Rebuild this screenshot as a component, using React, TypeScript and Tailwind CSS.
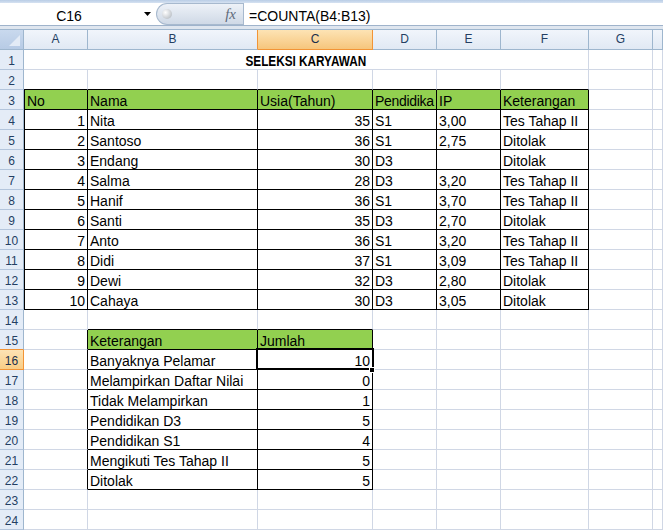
import clsx from "clsx";

// ================== SHEET DATA ==================
type V = string | number | null;

const data: Record<number, V[]> = {
  3: ["No", "Nama", "Usia(Tahun)", "Pendidika", "IP", "Keterangan"],
  4: [1, "Nita", 35, "S1", "3,00", "Tes Tahap II"],
  5: [2, "Santoso", 36, "S1", "2,75", "Ditolak"],
  6: [3, "Endang", 30, "D3", null, "Ditolak"],
  7: [4, "Salma", 28, "D3", "3,20", "Tes Tahap II"],
  8: [5, "Hanif", 36, "S1", "3,70", "Tes Tahap II"],
  9: [6, "Santi", 35, "D3", "2,70", "Ditolak"],
  10: [7, "Anto", 36, "S1", "3,20", "Tes Tahap II"],
  11: [8, "Didi", 37, "S1", "3,09", "Tes Tahap II"],
  12: [9, "Dewi", 32, "D3", "2,80", "Ditolak"],
  13: [10, "Cahaya", 30, "D3", "3,05", "Ditolak"],
  15: [null, "Keterangan", "Jumlah"],
  16: [null, "Banyaknya Pelamar", 10],
  17: [null, "Melampirkan Daftar Nilai", 0],
  18: [null, "Tidak Melampirkan", 1],
  19: [null, "Pendidikan D3", 5],
  20: [null, "Pendidikan S1", 4],
  21: [null, "Mengikuti Tes Tahap II", 5],
  22: [null, "Ditolak", 5],
};

const letters = ["A", "B", "C", "D", "E", "F", "G", "H"];
const rows = Array.from({ length: 24 }, (_, i) => i + 1);

const inTable = (r: number, c: number) =>
  (r >= 3 && r <= 13 && c >= 0 && c <= 5) ||
  (r >= 15 && r <= 22 && c >= 1 && c <= 2);

const isGreen = (r: number, c: number) =>
  (r === 3 && c <= 5) || (r === 15 && (c === 1 || c === 2));

// ================== FORMULA BAR ==================
const FormulaBar = () => (
  <div className="flex h-[30px] flex-col">
    <div className="h-[3px] bg-gradient-to-b from-[#b9cde6] to-[#d6e2f1]" />
    <div className="flex h-[22px] bg-white text-[14px] leading-[16px] text-black">
      <div className="flex w-[138px] items-end justify-center pb-[1px]">C16</div>
      <div className="flex w-[18px] items-center justify-center">
        <svg width="7" height="4" viewBox="0 0 7 4">
          <path d="M0 0H7L3.5 4Z" fill="#000" />
        </svg>
      </div>
      <div className="flex w-[87px] items-center rounded-l-[11px] border border-r-0 border-[#a7b9ce] bg-gradient-to-b from-[#eef2f8] to-[#cfd9e6]">
        <span className="ml-[5px] size-[10px] rounded-full bg-[radial-gradient(circle_at_35%_35%,#ffffff,#a9b0b8)]" />
        <span className="mr-[7px] ml-auto font-['Liberation_Serif',serif] text-[15px] italic text-[#5f6b7a]">
          fx
        </span>
      </div>
      <div className="flex flex-1 items-end border-l border-[#a7b9ce] pb-[1px] pl-[5px]">
        =COUNTA(B4:B13)
      </div>
    </div>
    <div className="h-px bg-[#9fb3cb]" />
    <div className="h-[3px] bg-[#dfe6ef]" />
    <div className="h-px bg-[#9eb6ce]" />
  </div>
);

// ================== CELLS ==================
const Cell = ({ r, c, v }: { r: number; c: number; v: V }) => {
  const num = typeof v === "number";
  return (
    <div
      className={clsx(
        "flex items-end overflow-hidden whitespace-nowrap border-r border-b px-[2px] text-[14px] leading-[16px] text-black",
        inTable(r, c) || inTable(r, c + 1) ? "border-r-black" : "border-r-[#d0d7e5]",
        inTable(r, c) || inTable(r + 1, c) ? "border-b-black" : "border-b-[#d0d7e5]",
        c === 0 && inTable(r, c) && "border-l border-l-black",
        isGreen(r, c) ? "bg-[#92d050]" : "bg-white",
        num ? "justify-end" : "justify-start",
        r === 3 && c === 3 && "tracking-[-0.3px]",
      )}
    >
      {v}
    </div>
  );
};

const RowHeader = ({ r }: { r: number }) => (
  <div
    className={clsx(
      "flex items-end justify-center border-r border-b text-[12px] leading-[16px]",
      r === 16
        ? "border-r-[#f29436] bg-gradient-to-b from-[#fde3b4] to-[#f8cd86] text-[#1a2e4a]"
        : "border-r-[#9eb6ce] bg-[#e4ecf7] text-[#243f63]",
      r === 15 || r === 16 ? "border-b-[#f29436]" : "border-b-[#b3c5dc]",
    )}
  >
    {r}
  </div>
);

// ================== MAIN ==================
export default function App() {
  return (
    <div className="h-[530px] w-[663px] overflow-hidden bg-white font-['Liberation_Sans',Arial,sans-serif]">
      <FormulaBar />

      <div className="relative grid auto-rows-[20px] grid-cols-[24px_64px_170px_115px_64px_64px_88px_64px_1fr]">
        {/* select all corner */}
        <div className="relative border-r border-b border-[#9eb6ce] bg-gradient-to-b from-[#c9d9ee] to-[#b7cbe5]">
          <svg className="absolute right-[3px] bottom-[3px]" width="11" height="11" viewBox="0 0 11 11">
            <path d="M11 0V11H0Z" fill="#e3ebf6" />
          </svg>
        </div>

        {/* column headers */}
        {letters.map((l, i) => (
          <div
            key={l}
            className={clsx(
              "flex items-center justify-center border-r border-b text-[12px] leading-[19px]",
              i === 2
                ? "border-b-[#f29436] bg-gradient-to-b from-[#fde3b4] to-[#f6c67c] text-[#1a2e4a]"
                : "border-b-[#9eb6ce] bg-gradient-to-b from-[#f1f5fb] to-[#e1e9f4] text-[#243f63]",
              i === 1 || i === 2 ? "border-r-[#f29436]" : "border-r-[#9eb6ce]",
            )}
          >
            {i < 7 ? l : ""}
          </div>
        ))}

        {rows.map((r) => (
          <div key={r} className="contents">
            <RowHeader r={r} />
            {r === 1 ? (
              <>
                <div className="col-span-6 flex items-end justify-center border-r border-b border-[#d0d7e5] text-[14px] leading-[16px] font-bold text-black">
                  <span className="inline-block scale-x-[0.84]">SELEKSI KARYAWAN</span>
                </div>
                <Cell r={1} c={6} v={null} />
                <Cell r={1} c={7} v={null} />
              </>
            ) : (
              letters.map((_, c) => (
                <Cell key={c} r={r} c={c} v={data[r]?.[c] ?? null} />
              ))
            )}
          </div>
        ))}

        {/* active cell C16 */}
        <div className="absolute top-[318px] left-[256px] h-[22px] w-[118px] border-2 border-black" />
        <div className="absolute top-[337px] left-[369px] size-[6px] border border-white bg-black" />
      </div>
    </div>
  );
}
